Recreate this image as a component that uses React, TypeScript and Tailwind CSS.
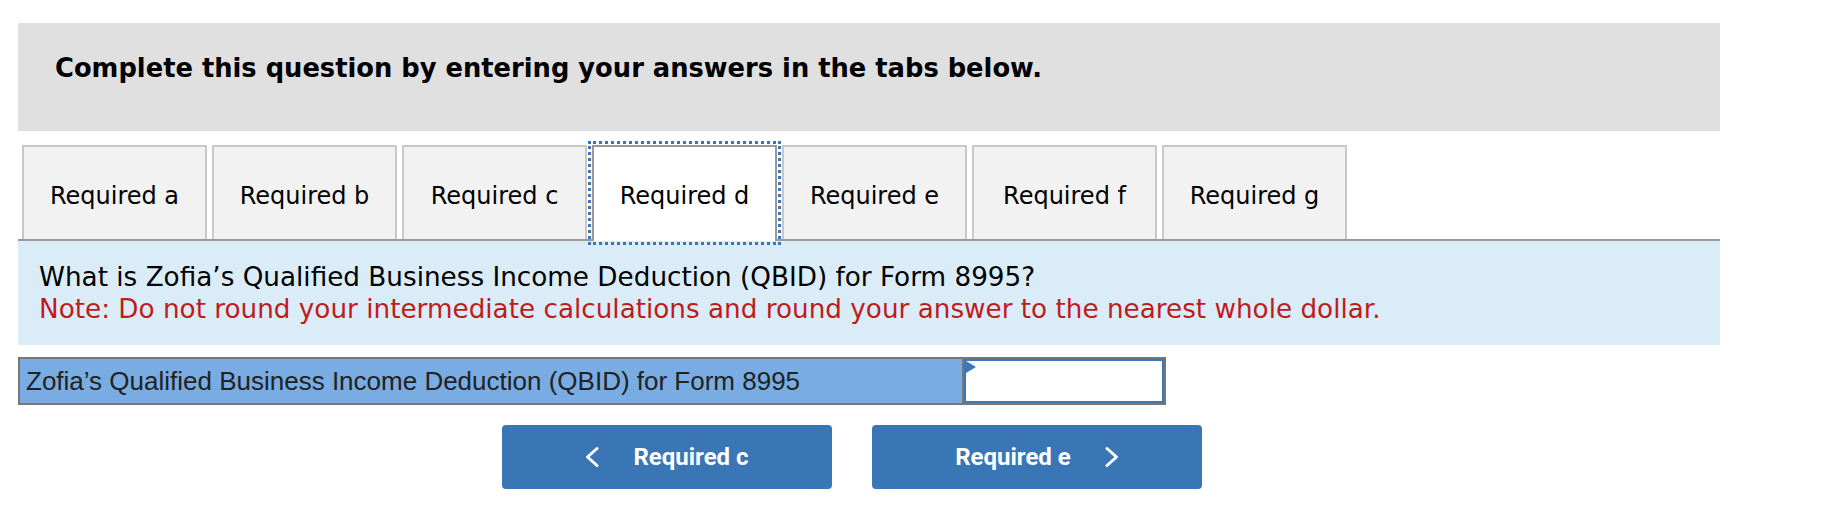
import React from 'react';

const tabs = ['a', 'b', 'c', 'd', 'e', 'f', 'g'];
const active = 'd';

const verdana = { fontFamily: '"DejaVu Sans", Verdana, sans-serif' };

const Chevron: React.FC<{ dir: 'left' | 'right' }> = ({ dir }) => (
  <svg width="14" height="20" viewBox="0 0 14 20" fill="none">
    <polyline
      points={dir === 'left' ? '12,1.5 2.5,10 12,18.5' : '2,1.5 11.5,10 2,18.5'}
      stroke="#ffffff"
      strokeWidth="3"
      strokeLinecap="round"
      strokeLinejoin="round"
    />
  </svg>
);

const TabButton: React.FC<{ id: string }> = ({ id }) => {
  const isActive = id === active;
  return (
    <div
      className={
        isActive
          ? 'w-[185px] h-[96px] -mb-[2px] pt-[5px] pb-[2px] flex items-center justify-center bg-white border-2 border-b-0 border-[#999999] outline-3 outline-dotted outline-[#3a76c0] outline-offset-1 text-[24px] text-black'
          : 'w-[185px] h-[94px] pt-[5px] flex items-center justify-center bg-[#f2f2f2] border-2 border-b-0 border-[#c8c8c8] text-[24px] text-black'
      }
      style={verdana}
    >
      Required {id}
    </div>
  );
};

const NavButton: React.FC<{ label: string; dir: 'left' | 'right' }> = ({ label, dir }) => (
  <button
    className="w-[330px] h-[64px] rounded-[4px] bg-[#3a76b6] text-white flex items-center justify-center gap-[34px] text-[24px] font-bold"
    style={{ fontFamily: 'Roboto, "Liberation Sans", sans-serif' }}
  >
    {dir === 'left' && <Chevron dir="left" />}
    <span>{label}</span>
    {dir === 'right' && <Chevron dir="right" />}
  </button>
);

export default function App() {
  return (
    <div className="w-[1837px] h-[522px] bg-white pt-[23px] pl-[18px]">
      <div className="w-[1702px]">
        <div className="h-[108px] bg-[#e0e0e0] pl-[37px] pt-[29px]">
          <h2 className="text-[25.75px] leading-[32px] font-bold text-black" style={verdana}>
            Complete this question by entering your answers in the tabs below.
          </h2>
        </div>

        <div className="mt-[14px] flex gap-[5px] pl-[4px] border-b-2 border-[#999999]">
          {tabs.map(t => (
            <TabButton key={t} id={t} />
          ))}
        </div>

        <div className="h-[104px] bg-[#dbecf9] pl-[21px] pt-[20px] text-[26.25px] leading-[32px]" style={verdana}>
          <p className="text-black">What is Zofia’s Qualified Business Income Deduction (QBID) for Form 8995?</p>
          <p className="text-[#bf1b1b]">
            Note: Do not round your intermediate calculations and round your answer to the nearest whole dollar.
          </p>
        </div>
      </div>

      <div className="mt-[12px] w-[1148px] h-[48px] flex border-2 border-[#777777]">
        <div
          className="w-[944px] bg-[#78ace2] border-r-2 border-[#777777] pl-[6px] flex items-center text-[26px] text-[#222222]"
          style={{ fontFamily: '"Liberation Sans", Arial, sans-serif' }}
        >
          Zofia’s Qualified Business Income Deduction (QBID) for Form 8995
        </div>
        <div className="relative flex-1 border-2 border-[#3b78b9] bg-white">
          <span className="absolute left-0 top-0 w-0 h-0 border-t-[6px] border-b-[6px] border-l-[10px] border-t-transparent border-b-transparent border-l-[#3b78b9]" />
        </div>
      </div>

      <div className="mt-[20px] ml-[484px] flex gap-[40px]">
        <NavButton label="Required c" dir="left" />
        <NavButton label="Required e" dir="right" />
      </div>
    </div>
  );
}
